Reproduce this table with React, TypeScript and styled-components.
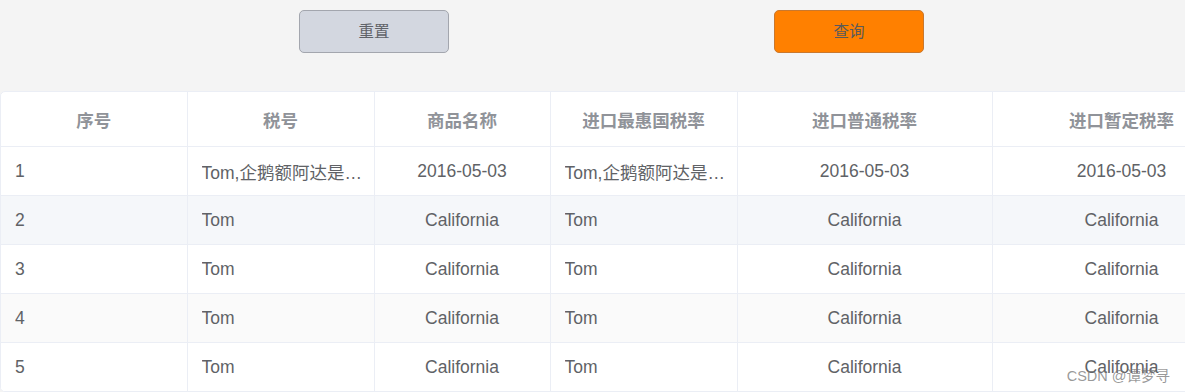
import styled, { createGlobalStyle } from "styled-components";

const GlobalStyle = createGlobalStyle`
    body {
        margin: 0;
        background: #f4f4f4;
        font-family: "Liberation Sans", "Noto Sans CJK SC", sans-serif;
        overflow: hidden;
    }
`

type Align = "left" | "center";

const columns: { title: string; width: number; align: Align }[] = [
    { title: "序号", width: 186, align: "left" },
    { title: "税号", width: 187, align: "left" },
    { title: "商品名称", width: 176, align: "center" },
    { title: "进口最惠国税率", width: 187, align: "left" },
    { title: "进口普通税率", width: 255, align: "center" },
    { title: "进口暂定税率", width: 259, align: "center" },
];

const longName = "Tom,企鹅额阿达是大苏打撒旦撒旦";

const rows = [
    ["1", longName, "2016-05-03", longName, "2016-05-03", "2016-05-03"],
    ["2", "Tom", "California", "Tom", "California", "California"],
    ["3", "Tom", "California", "Tom", "California", "California"],
    ["4", "Tom", "California", "Tom", "California", "California"],
    ["5", "Tom", "California", "Tom", "California", "California"],
];

const rowBg = ["#ffffff", "#f5f7fa", "#ffffff", "#fafafa", "#ffffff"];

const App = () => {
    return (
        <Page>
            <GlobalStyle />
            <Toolbar>
                <Button variant="reset">重置</Button>
                <Button variant="query">查询</Button>
            </Toolbar>
            <TableWrap>
                <Table>
                    <colgroup>
                        {columns.map((c) => (
                            <col key={c.title} style={{ width: c.width }} />
                        ))}
                    </colgroup>
                    <thead>
                        <tr>
                            {columns.map((c) => (
                                <HeadCell key={c.title}>{c.title}</HeadCell>
                            ))}
                        </tr>
                    </thead>
                    <tbody>
                        {rows.map((r, i) => (
                            <BodyRow key={i} bg={rowBg[i]}>
                                {r.map((v, j) => (
                                    <Cell key={j} align={columns[j].align}>
                                        <CellText>{v}</CellText>
                                    </Cell>
                                ))}
                            </BodyRow>
                        ))}
                    </tbody>
                </Table>
            </TableWrap>
            <Watermark>CSDN @谭梦寻</Watermark>
        </Page>
    )
}

const Page = styled.div`
    position: relative;
    width: 1185px;
    height: 392px;
    overflow: hidden;
`

const Toolbar = styled.div`
    height: 91px;
    box-sizing: border-box;
    padding: 10px 0 0 299px;
    display: flex;
    align-items: flex-start;
    gap: 325px;
`

const Button = styled.div<{ variant: "reset" | "query" }>`
    width: 150px;
    height: 43px;
    box-sizing: border-box;
    padding-bottom: 3px;
    border-radius: 5px;
    display: flex;
    align-items: center;
    justify-content: center;
    font-size: 15.5px;
    color: ${(p) => (p.variant === "reset" ? "#5f6268" : "#5a5a5a")};
    background: ${(p) => (p.variant === "reset" ? "#d3d7e0" : "#ff8000")};
    border: 1px solid ${(p) => (p.variant === "reset" ? "#a3a6ae" : "#c9782e")};
`

const TableWrap = styled.div`
    width: 1252px;
    height: 301px;
    box-sizing: border-box;
    border: 1px solid #ebeef5;
    border-radius: 5px;
    background: #ffffff;
    overflow: hidden;
`

const Table = styled.table`
    width: 1250px;
    table-layout: fixed;
    border-collapse: collapse;
`

const HeadCell = styled.th`
    height: 54px;
    padding: 0 14px;
    font-size: 17.5px;
    font-weight: bold;
    color: #909399;
    text-align: center;
    border-right: 1px solid #ebeef5;
    border-bottom: 1px solid #ebeef5;
    white-space: nowrap;
`

const BodyRow = styled.tr<{ bg: string }>`
    background: ${(p) => p.bg};
`

const Cell = styled.td<{ align: Align }>`
    height: 48px;
    padding: ${(p) => (p.align === "left" ? "0 10px 0 14px" : "0 12px")};
    font-size: 17.5px;
    color: #606266;
    text-align: ${(p) => p.align};
    border-right: 1px solid #ebeef5;
    border-bottom: 1px solid #ebeef5;
`

const CellText = styled.div`
    white-space: nowrap;
    overflow: hidden;
    text-overflow: ellipsis;
`

const Watermark = styled.div`
    position: absolute;
    right: 15px;
    bottom: 7px;
    font-size: 14.5px;
    color: rgba(120, 120, 120, 0.75);
`

export default App;
